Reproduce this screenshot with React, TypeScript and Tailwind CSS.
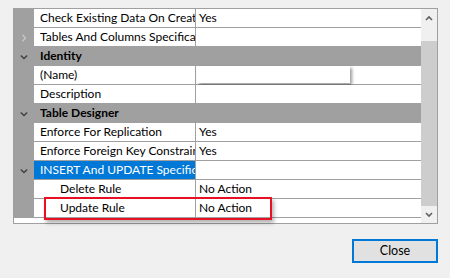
const font = { fontFamily: 'Lato, "Noto Sans", sans-serif' };

type Row = {
  kind: "prop" | "cat";
  name: string;
  value?: string;
  indent?: boolean;
  selected?: boolean;
  toggle?: "open" | "closed";
  tip?: boolean;
};

const rows: Row[] = [
  { kind: "prop", name: "Check Existing Data On Creation Or Re-Enabling", value: "Yes" },
  { kind: "prop", name: "Tables And Columns Specification", toggle: "closed" },
  { kind: "cat", name: "Identity", toggle: "open" },
  { kind: "prop", name: "(Name)", tip: true },
  { kind: "prop", name: "Description" },
  { kind: "cat", name: "Table Designer", toggle: "open" },
  { kind: "prop", name: "Enforce For Replication", value: "Yes" },
  { kind: "prop", name: "Enforce Foreign Key Constraint", value: "Yes" },
  { kind: "prop", name: "INSERT And UPDATE Specification", selected: true, toggle: "open" },
  { kind: "prop", name: "Delete Rule", value: "No Action", indent: true },
  { kind: "prop", name: "Update Rule", value: "No Action", indent: true },
];

function Chevron({ open, light }: { open: boolean; light?: boolean }) {
  return (
    <svg width="8" height="8" viewBox="0 0 8 8" fill="none" stroke={light ? "#c6c6c6" : "#404040"} strokeWidth="1.4">
      {open ? <polyline points="0.8,2.5 4,5.5 7.2,2.5" /> : <polyline points="2.5,0.8 5.5,4 2.5,7.2" />}
    </svg>
  );
}

function GridRow({ row }: { row: Row }) {
  const gutter = (
    <div className="flex w-[20px] shrink-0 items-center justify-center bg-[#a0a0a0]">
      {row.toggle && <Chevron open={row.toggle === "open"} light={row.kind === "prop" && row.toggle === "closed"} />}
    </div>
  );

  if (row.kind === "cat") {
    return (
      <div className="flex h-[19px] bg-[#a0a0a0]">
        {gutter}
        <div className="flex items-center pb-[1px] pl-[6px] font-bold text-black">{row.name}</div>
      </div>
    );
  }

  return (
    <div className="flex h-[19px]">
      {gutter}
      <div
        className={`flex w-[162px] shrink-0 items-center overflow-hidden whitespace-nowrap border-b border-r border-[#a0a0a0] ${
          row.indent ? "pl-[26px]" : "pl-[6px]"
        } ${row.selected ? "bg-[#0078d7] text-white" : "bg-white text-black"}`}
      >
        {row.name}
      </div>
      <div className="relative flex flex-1 items-center overflow-visible whitespace-nowrap border-b border-[#a0a0a0] bg-white pl-[3px] text-black">
        {row.value}
        {row.tip && (
          <div className="absolute left-[1px] top-0 h-[17px] w-[153px] bg-white shadow-[2px_2px_3px_rgba(0,0,0,0.4)]" />
        )}
      </div>
    </div>
  );
}

function ScrollBar() {
  return (
    <div className="flex w-[16px] shrink-0 flex-col bg-[#f0f0f0]">
      <div className="flex h-[17px] items-center justify-center">
        <svg width="8" height="6" viewBox="0 0 8 6" fill="none" stroke="#606060" strokeWidth="1.6">
          <polyline points="1,5 4,2 7,5" />
        </svg>
      </div>
      <div className="flex flex-1 flex-col pt-[15px]">
        <div className="flex-1 bg-[#cdcdcd]" />
      </div>
      <div className="flex h-[17px] items-center justify-center">
        <svg width="8" height="6" viewBox="0 0 8 6" fill="none" stroke="#606060" strokeWidth="1.6">
          <polyline points="1,1 4,4 7,1" />
        </svg>
      </div>
    </div>
  );
}

export default function App() {
  return (
    <div className="relative flex h-[278px] w-[450px] flex-col bg-[#f0f0f0] text-[12px] leading-none" style={font}>
      <div className="ml-[13px] mt-[8px] flex h-[216px] w-[425px] border border-[#a0a0a0] bg-white">
        <div className="flex w-[407px] flex-col">
          {rows.map((r) => (
            <GridRow key={r.name} row={r} />
          ))}
        </div>
        <ScrollBar />
      </div>

      <div className="mr-[12px] mt-[15px] flex justify-end">
        <button className="h-[24px] w-[86px] border-2 border-[#0078d7] bg-[#e1e1e1] text-[12.5px] text-black">Close</button>
      </div>

      <div className="pointer-events-none absolute left-[44px] top-[197px] h-[23px] w-[228px] border-2 border-[#e81123] shadow-[2px_3px_4px_rgba(0,0,0,0.3)]" />
    </div>
  );
}
